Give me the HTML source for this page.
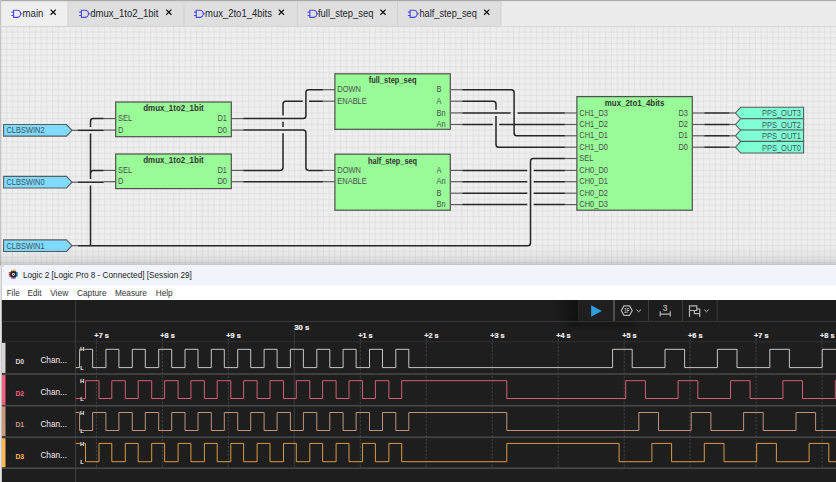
<!DOCTYPE html>
<html lang="en"><head><meta charset="utf-8"><title>Logic</title>
<style>html,body{margin:0;padding:0;background:#efefef;overflow:hidden}body{width:836px;height:482px}</style></head>
<body>
<svg width="836" height="482" viewBox="0 0 836 482" font-family="Liberation Sans, Arial, sans-serif" style="display:block">
<defs>
<pattern id="grid" x="0.25" y="2.6" width="5.7616" height="5.77" patternUnits="userSpaceOnUse">
<rect width="5.7616" height="5.77" fill="#eeeeee"/>
<path d="M0.5 0V5.77M0 0.5H5.7616" stroke="#dfdfdf" stroke-width="0.8" fill="none"/>
</pattern>
<linearGradient id="shadow" x1="0" x2="1" y1="0" y2="0"><stop offset="0" stop-color="#000" stop-opacity="0"/><stop offset="1" stop-color="#000" stop-opacity="0.45"/></linearGradient>
<linearGradient id="shadowv" x1="0" x2="0" y1="0" y2="1"><stop offset="0" stop-color="#000" stop-opacity="0.22"/><stop offset="1" stop-color="#000" stop-opacity="0"/></linearGradient>
<linearGradient id="wshadow" x1="0" x2="0" y1="0" y2="1"><stop offset="0" stop-color="#000" stop-opacity="0"/><stop offset="0.6" stop-color="#000" stop-opacity="0.04"/><stop offset="1" stop-color="#000" stop-opacity="0.13"/></linearGradient>
<filter id="blur" x="-20%" y="-100%" width="140%" height="300%"><feGaussianBlur stdDeviation="3 2"/></filter>
</defs>
<rect x="0" y="0" width="836" height="482" fill="url(#grid)"/>
<rect x="0" y="0" width="836" height="27" fill="#dfdfdf"/>
<rect x="0" y="0" width="68" height="27" fill="#efefef"/>
<rect x="0" y="0" width="836" height="1.2" fill="#ababab"/>
<rect x="0" y="0" width="1.2" height="266" fill="#c4c4c4"/>
<rect x="0" y="26" width="836" height="1" fill="#d2d2d2"/>
<rect x="501" y="1.2" width="335" height="25" fill="#ececec"/>
<rect x="67.5" y="1.2" width="1" height="25" fill="#cfcfcf"/>
<rect x="183.5" y="1.2" width="1" height="25" fill="#cfcfcf"/>
<rect x="296.8" y="1.2" width="1" height="25" fill="#cfcfcf"/>
<rect x="397.0" y="1.2" width="1" height="25" fill="#cfcfcf"/>
<rect x="500.5" y="1.2" width="1" height="25" fill="#cfcfcf"/>
<g fill="none" stroke="#4a4af0" stroke-width="1.1" stroke-linecap="round"><path d="M13.600000000000001 10.200000000000001H17.1A3.6 3.6 0 0 1 17.1 17.400000000000002H13.600000000000001Z"/><path d="M11.8 12.100000000000001H13.600000000000001M11.8 15.5H13.600000000000001M20.700000000000003 13.8H22.0"/></g>
<text x="22.6" y="17.2" font-size="10" fill="#26262e" text-anchor="start" font-weight="normal" textLength="20.8" lengthAdjust="spacingAndGlyphs" >main</text>
<path d="M50.6 9.6L55.800000000000004 14.8M55.800000000000004 9.6L50.6 14.8" stroke="#111" stroke-width="1.3" fill="none"/>
<g fill="none" stroke="#4a4af0" stroke-width="1.1" stroke-linecap="round"><path d="M81.39999999999999 10.200000000000001H84.89999999999999A3.6 3.6 0 0 1 84.89999999999999 17.400000000000002H81.39999999999999Z"/><path d="M79.6 12.100000000000001H81.39999999999999M79.6 15.5H81.39999999999999M88.5 13.8H89.8"/></g>
<text x="90.2" y="17.2" font-size="10" fill="#26262e" text-anchor="start" font-weight="normal" textLength="68.2" lengthAdjust="spacingAndGlyphs" >dmux_1to2_1bit</text>
<path d="M166.20000000000002 9.6L171.4 14.8M171.4 9.6L166.20000000000002 14.8" stroke="#111" stroke-width="1.3" fill="none"/>
<g fill="none" stroke="#4a4af0" stroke-width="1.1" stroke-linecap="round"><path d="M196.20000000000002 10.200000000000001H199.70000000000002A3.6 3.6 0 0 1 199.70000000000002 17.400000000000002H196.20000000000002Z"/><path d="M194.4 12.100000000000001H196.20000000000002M194.4 15.5H196.20000000000002M203.3 13.8H204.6"/></g>
<text x="205" y="17.2" font-size="10" fill="#26262e" text-anchor="start" font-weight="normal" textLength="67" lengthAdjust="spacingAndGlyphs" >mux_2to1_4bits</text>
<path d="M278.79999999999995 9.6L284.0 14.8M284.0 9.6L278.79999999999995 14.8" stroke="#111" stroke-width="1.3" fill="none"/>
<g fill="none" stroke="#4a4af0" stroke-width="1.1" stroke-linecap="round"><path d="M309.8 10.200000000000001H313.3A3.6 3.6 0 0 1 313.3 17.400000000000002H309.8Z"/><path d="M308 12.100000000000001H309.8M308 15.5H309.8M316.9 13.8H318.2"/></g>
<text x="318" y="17.2" font-size="10" fill="#26262e" text-anchor="start" font-weight="normal" textLength="55.5" lengthAdjust="spacingAndGlyphs" >full_step_seq</text>
<path d="M380.4 9.6L385.6 14.8M385.6 9.6L380.4 14.8" stroke="#111" stroke-width="1.3" fill="none"/>
<g fill="none" stroke="#4a4af0" stroke-width="1.1" stroke-linecap="round"><path d="M410.1 10.200000000000001H413.6A3.6 3.6 0 0 1 413.6 17.400000000000002H410.1Z"/><path d="M408.3 12.100000000000001H410.1M408.3 15.5H410.1M417.2 13.8H418.5"/></g>
<text x="419.5" y="17.2" font-size="10" fill="#26262e" text-anchor="start" font-weight="normal" textLength="57.3" lengthAdjust="spacingAndGlyphs" >half_step_seq</text>
<path d="M484.09999999999997 9.6L489.3 14.8M489.3 9.6L484.09999999999997 14.8" stroke="#111" stroke-width="1.3" fill="none"/>
<path d="M72 130.3H78.0" stroke="#5a5a5a" stroke-width="1.15" fill="none"/>
<path d="M72 182.2H78.0" stroke="#5a5a5a" stroke-width="1.15" fill="none"/>
<path d="M72 245.7H78.0" stroke="#5a5a5a" stroke-width="1.15" fill="none"/>
<path d="M103.7 118.6H115.7" stroke="#5a5a5a" stroke-width="1.15" fill="none"/>
<path d="M231.3 118.6H243.3" stroke="#5a5a5a" stroke-width="1.15" fill="none"/>
<path d="M103.7 130.1H115.7" stroke="#5a5a5a" stroke-width="1.15" fill="none"/>
<path d="M231.3 130.1H243.3" stroke="#5a5a5a" stroke-width="1.15" fill="none"/>
<path d="M103.7 170.4H115.7" stroke="#5a5a5a" stroke-width="1.15" fill="none"/>
<path d="M231.3 170.4H243.3" stroke="#5a5a5a" stroke-width="1.15" fill="none"/>
<path d="M103.7 181.7H115.7" stroke="#5a5a5a" stroke-width="1.15" fill="none"/>
<path d="M231.3 181.7H243.3" stroke="#5a5a5a" stroke-width="1.15" fill="none"/>
<path d="M322.9 89.7H334.9" stroke="#5a5a5a" stroke-width="1.15" fill="none"/>
<path d="M322.9 101.2H334.9" stroke="#5a5a5a" stroke-width="1.15" fill="none"/>
<path d="M322.9 170.4H334.9" stroke="#5a5a5a" stroke-width="1.15" fill="none"/>
<path d="M322.9 181.7H334.9" stroke="#5a5a5a" stroke-width="1.15" fill="none"/>
<path d="M450.3 89.7H462.3" stroke="#5a5a5a" stroke-width="1.15" fill="none"/>
<path d="M450.3 101.2H462.3" stroke="#5a5a5a" stroke-width="1.15" fill="none"/>
<path d="M450.3 112.9H462.3" stroke="#5a5a5a" stroke-width="1.15" fill="none"/>
<path d="M450.3 124.5H462.3" stroke="#5a5a5a" stroke-width="1.15" fill="none"/>
<path d="M450.3 170.4H462.3" stroke="#5a5a5a" stroke-width="1.15" fill="none"/>
<path d="M450.3 181.7H462.3" stroke="#5a5a5a" stroke-width="1.15" fill="none"/>
<path d="M450.3 193.2H462.3" stroke="#5a5a5a" stroke-width="1.15" fill="none"/>
<path d="M450.3 204.6H462.3" stroke="#5a5a5a" stroke-width="1.15" fill="none"/>
<path d="M564.9 113.0H576.9" stroke="#5a5a5a" stroke-width="1.15" fill="none"/>
<path d="M564.9 124.5H576.9" stroke="#5a5a5a" stroke-width="1.15" fill="none"/>
<path d="M564.9 135.8H576.9" stroke="#5a5a5a" stroke-width="1.15" fill="none"/>
<path d="M564.9 147.2H576.9" stroke="#5a5a5a" stroke-width="1.15" fill="none"/>
<path d="M564.9 158.5H576.9" stroke="#5a5a5a" stroke-width="1.15" fill="none"/>
<path d="M564.9 170.4H576.9" stroke="#5a5a5a" stroke-width="1.15" fill="none"/>
<path d="M564.9 181.7H576.9" stroke="#5a5a5a" stroke-width="1.15" fill="none"/>
<path d="M564.9 193.2H576.9" stroke="#5a5a5a" stroke-width="1.15" fill="none"/>
<path d="M564.9 204.6H576.9" stroke="#5a5a5a" stroke-width="1.15" fill="none"/>
<path d="M692.3 113.0H704.3" stroke="#5a5a5a" stroke-width="1.15" fill="none"/>
<path d="M729.5 113.0H735.5" stroke="#5a5a5a" stroke-width="1.15" fill="none"/>
<path d="M692.3 124.5H704.3" stroke="#5a5a5a" stroke-width="1.15" fill="none"/>
<path d="M729.5 124.5H735.5" stroke="#5a5a5a" stroke-width="1.15" fill="none"/>
<path d="M692.3 135.8H704.3" stroke="#5a5a5a" stroke-width="1.15" fill="none"/>
<path d="M729.5 135.8H735.5" stroke="#5a5a5a" stroke-width="1.15" fill="none"/>
<path d="M692.3 147.2H704.3" stroke="#5a5a5a" stroke-width="1.15" fill="none"/>
<path d="M729.5 147.2H735.5" stroke="#5a5a5a" stroke-width="1.15" fill="none"/>
<path d="M78.0 130.3H103.7" fill="none" stroke="#262626" stroke-width="1.5" stroke-linejoin="round"/>
<path d="M78.0 182.2H103.7" fill="none" stroke="#262626" stroke-width="1.5" stroke-linejoin="round"/>
<path d="M78.0 245.7H527.7Q530.5 245.7 530.5 242.89999999999998V161.3Q530.5 158.5 533.3 158.5H564.9" fill="none" stroke="#262626" stroke-width="1.5" stroke-linejoin="round"/>
<path d="M90.5 245.7V185.39999999999998M90.5 179.0V173.20000000000002Q90.5 170.4 93.3 170.4H103.7" fill="none" stroke="#262626" stroke-width="1.5" stroke-linejoin="round"/>
<path d="M90.5 173.20000000000002V133.5M90.5 127.10000000000001V121.39999999999999Q90.5 118.6 93.3 118.6H103.7" fill="none" stroke="#262626" stroke-width="1.5" stroke-linejoin="round"/>
<path d="M243.3 118.6H303.09999999999997Q305.9 118.6 305.9 115.8V92.5Q305.9 89.7 308.7 89.7H322.9" fill="none" stroke="#262626" stroke-width="1.5" stroke-linejoin="round"/>
<path d="M243.3 130.1H303.09999999999997Q305.9 130.1 305.9 132.9V167.6Q305.9 170.4 308.7 170.4H322.9" fill="none" stroke="#262626" stroke-width="1.5" stroke-linejoin="round"/>
<path d="M243.3 170.4H280.2Q283 170.4 283 167.6V133.29999999999998M283 126.89999999999999V121.8M283 115.39999999999999V104.0Q283 101.2 285.8 101.2H302.7M309.09999999999997 101.2H322.9" fill="none" stroke="#262626" stroke-width="1.5" stroke-linejoin="round"/>
<path d="M243.3 181.7H322.9" fill="none" stroke="#262626" stroke-width="1.5" stroke-linejoin="round"/>
<path d="M462.3 89.7H511.3Q514.1 89.7 514.1 92.5V133.0Q514.1 135.8 516.9 135.8H564.9" fill="none" stroke="#262626" stroke-width="1.5" stroke-linejoin="round"/>
<path d="M462.3 101.2H493.2Q496 101.2 496 104.0V109.7M496 116.10000000000001V144.39999999999998Q496 147.2 498.8 147.2H564.9" fill="none" stroke="#262626" stroke-width="1.5" stroke-linejoin="round"/>
<path d="M462.3 112.9H510.6M517.6 112.9H564.9" fill="none" stroke="#262626" stroke-width="1.5" stroke-linejoin="round"/>
<path d="M462.3 124.5H492.8M499.2 124.5H564.9" fill="none" stroke="#262626" stroke-width="1.5" stroke-linejoin="round"/>
<path d="M462.3 170.4H527.3M533.7 170.4H564.9" fill="none" stroke="#262626" stroke-width="1.5" stroke-linejoin="round"/>
<path d="M462.3 181.7H527.3M533.7 181.7H564.9" fill="none" stroke="#262626" stroke-width="1.5" stroke-linejoin="round"/>
<path d="M462.3 193.2H527.3M533.7 193.2H564.9" fill="none" stroke="#262626" stroke-width="1.5" stroke-linejoin="round"/>
<path d="M462.3 204.6H527.3M533.7 204.6H564.9" fill="none" stroke="#262626" stroke-width="1.5" stroke-linejoin="round"/>
<path d="M704.3 113.0H729.5" fill="none" stroke="#262626" stroke-width="1.5" stroke-linejoin="round"/>
<path d="M704.3 124.5H729.5" fill="none" stroke="#262626" stroke-width="1.5" stroke-linejoin="round"/>
<path d="M704.3 135.8H729.5" fill="none" stroke="#262626" stroke-width="1.5" stroke-linejoin="round"/>
<path d="M704.3 147.2H729.5" fill="none" stroke="#262626" stroke-width="1.5" stroke-linejoin="round"/>
<rect x="115.7" y="102" width="115.60000000000001" height="34.69999999999999" fill="#98fb98" stroke="#505050" stroke-width="1.2"/>
<text x="173.5" y="111.4" font-size="9" fill="#333" text-anchor="middle" font-weight="bold" textLength="60.5" lengthAdjust="spacingAndGlyphs" >dmux_1to2_1bit</text>
<text transform="translate(118.10 121.20) scale(0.89 1)" font-size="8.4" fill="#4f4f4f" text-anchor="start" font-weight="normal">SEL</text>
<text transform="translate(118.10 132.70) scale(0.89 1)" font-size="8.4" fill="#4f4f4f" text-anchor="start" font-weight="normal">D</text>
<text transform="translate(217.40 121.20) scale(0.89 1)" font-size="8.4" fill="#4f4f4f" text-anchor="start" font-weight="normal">D1</text>
<text transform="translate(217.40 132.70) scale(0.89 1)" font-size="8.4" fill="#4f4f4f" text-anchor="start" font-weight="normal">D0</text>
<rect x="115.7" y="154" width="115.60000000000001" height="34.599999999999994" fill="#98fb98" stroke="#505050" stroke-width="1.2"/>
<text x="173.5" y="163.4" font-size="9" fill="#333" text-anchor="middle" font-weight="bold" textLength="60.5" lengthAdjust="spacingAndGlyphs" >dmux_1to2_1bit</text>
<text transform="translate(118.10 173.00) scale(0.89 1)" font-size="8.4" fill="#4f4f4f" text-anchor="start" font-weight="normal">SEL</text>
<text transform="translate(118.10 184.30) scale(0.89 1)" font-size="8.4" fill="#4f4f4f" text-anchor="start" font-weight="normal">D</text>
<text transform="translate(217.40 173.00) scale(0.89 1)" font-size="8.4" fill="#4f4f4f" text-anchor="start" font-weight="normal">D1</text>
<text transform="translate(217.40 184.30) scale(0.89 1)" font-size="8.4" fill="#4f4f4f" text-anchor="start" font-weight="normal">D0</text>
<rect x="334.9" y="73.8" width="115.40000000000003" height="55.500000000000014" fill="#98fb98" stroke="#505050" stroke-width="1.2"/>
<text x="392.6" y="83.2" font-size="9" fill="#333" text-anchor="middle" font-weight="bold" textLength="47.7" lengthAdjust="spacingAndGlyphs" >full_step_seq</text>
<text transform="translate(337.30 92.30) scale(0.89 1)" font-size="8.4" fill="#4f4f4f" text-anchor="start" font-weight="normal">DOWN</text>
<text transform="translate(337.30 103.80) scale(0.89 1)" font-size="8.4" fill="#4f4f4f" text-anchor="start" font-weight="normal">ENABLE</text>
<text transform="translate(436.40 92.30) scale(0.89 1)" font-size="8.4" fill="#4f4f4f" text-anchor="start" font-weight="normal">B</text>
<text transform="translate(436.40 103.80) scale(0.89 1)" font-size="8.4" fill="#4f4f4f" text-anchor="start" font-weight="normal">A</text>
<text transform="translate(436.40 115.50) scale(0.89 1)" font-size="8.4" fill="#4f4f4f" text-anchor="start" font-weight="normal">Bn</text>
<text transform="translate(436.40 127.10) scale(0.89 1)" font-size="8.4" fill="#4f4f4f" text-anchor="start" font-weight="normal">An</text>
<rect x="334.9" y="154.2" width="115.40000000000003" height="56.0" fill="#98fb98" stroke="#505050" stroke-width="1.2"/>
<text x="392.6" y="163.6" font-size="9" fill="#333" text-anchor="middle" font-weight="bold" textLength="49" lengthAdjust="spacingAndGlyphs" >half_step_seq</text>
<text transform="translate(337.30 173.00) scale(0.89 1)" font-size="8.4" fill="#4f4f4f" text-anchor="start" font-weight="normal">DOWN</text>
<text transform="translate(337.30 184.30) scale(0.89 1)" font-size="8.4" fill="#4f4f4f" text-anchor="start" font-weight="normal">ENABLE</text>
<text transform="translate(436.40 173.00) scale(0.89 1)" font-size="8.4" fill="#4f4f4f" text-anchor="start" font-weight="normal">A</text>
<text transform="translate(436.40 184.30) scale(0.89 1)" font-size="8.4" fill="#4f4f4f" text-anchor="start" font-weight="normal">An</text>
<text transform="translate(436.40 195.80) scale(0.89 1)" font-size="8.4" fill="#4f4f4f" text-anchor="start" font-weight="normal">B</text>
<text transform="translate(436.40 207.20) scale(0.89 1)" font-size="8.4" fill="#4f4f4f" text-anchor="start" font-weight="normal">Bn</text>
<rect x="576.9" y="96.6" width="115.39999999999998" height="113.6" fill="#98fb98" stroke="#505050" stroke-width="1.2"/>
<text x="634.5999999999999" y="106.0" font-size="9" fill="#333" text-anchor="middle" font-weight="bold" textLength="59.5" lengthAdjust="spacingAndGlyphs" >mux_2to1_4bits</text>
<text transform="translate(579.30 115.60) scale(0.89 1)" font-size="8.4" fill="#4f4f4f" text-anchor="start" font-weight="normal">CH1_D3</text>
<text transform="translate(579.30 127.10) scale(0.89 1)" font-size="8.4" fill="#4f4f4f" text-anchor="start" font-weight="normal">CH1_D2</text>
<text transform="translate(579.30 138.40) scale(0.89 1)" font-size="8.4" fill="#4f4f4f" text-anchor="start" font-weight="normal">CH1_D1</text>
<text transform="translate(579.30 149.80) scale(0.89 1)" font-size="8.4" fill="#4f4f4f" text-anchor="start" font-weight="normal">CH1_D0</text>
<text transform="translate(579.30 161.10) scale(0.89 1)" font-size="8.4" fill="#4f4f4f" text-anchor="start" font-weight="normal">SEL</text>
<text transform="translate(579.30 173.00) scale(0.89 1)" font-size="8.4" fill="#4f4f4f" text-anchor="start" font-weight="normal">CH0_D0</text>
<text transform="translate(579.30 184.30) scale(0.89 1)" font-size="8.4" fill="#4f4f4f" text-anchor="start" font-weight="normal">CH0_D1</text>
<text transform="translate(579.30 195.80) scale(0.89 1)" font-size="8.4" fill="#4f4f4f" text-anchor="start" font-weight="normal">CH0_D2</text>
<text transform="translate(579.30 207.20) scale(0.89 1)" font-size="8.4" fill="#4f4f4f" text-anchor="start" font-weight="normal">CH0_D3</text>
<text transform="translate(678.40 115.60) scale(0.89 1)" font-size="8.4" fill="#4f4f4f" text-anchor="start" font-weight="normal">D3</text>
<text transform="translate(678.40 127.10) scale(0.89 1)" font-size="8.4" fill="#4f4f4f" text-anchor="start" font-weight="normal">D2</text>
<text transform="translate(678.40 138.40) scale(0.89 1)" font-size="8.4" fill="#4f4f4f" text-anchor="start" font-weight="normal">D1</text>
<text transform="translate(678.40 149.80) scale(0.89 1)" font-size="8.4" fill="#4f4f4f" text-anchor="start" font-weight="normal">D0</text>
<path d="M3.6 124.50000000000001H66.5L72 130.3L66.5 136.10000000000002H3.6Z" fill="#7fdbff" stroke="#5c5c5c" stroke-width="1.1" stroke-linejoin="miter"/>
<text transform="translate(6.40 133.10) scale(0.89 1)" font-size="8.4" fill="#44525c" text-anchor="start" font-weight="normal">CLBSWIN2</text>
<path d="M3.6 176.39999999999998H66.5L72 182.2L66.5 188.0H3.6Z" fill="#7fdbff" stroke="#5c5c5c" stroke-width="1.1" stroke-linejoin="miter"/>
<text transform="translate(6.40 185.00) scale(0.89 1)" font-size="8.4" fill="#44525c" text-anchor="start" font-weight="normal">CLBSWIN0</text>
<path d="M3.6 239.89999999999998H66.5L72 245.7L66.5 251.5H3.6Z" fill="#7fdbff" stroke="#5c5c5c" stroke-width="1.1" stroke-linejoin="miter"/>
<text transform="translate(6.40 248.50) scale(0.89 1)" font-size="8.4" fill="#44525c" text-anchor="start" font-weight="normal">CLBSWIN1</text>
<path d="M803.6 107.2H740.7L735.5 113.0L740.7 118.8H803.6Z" fill="#7fffd4" stroke="#5c5c5c" stroke-width="1.1" stroke-linejoin="miter"/>
<text transform="translate(801.00 116.30) scale(0.89 1)" font-size="8.4" fill="#44525c" text-anchor="end" font-weight="normal">PPS_OUT3</text>
<path d="M803.6 118.7H740.7L735.5 124.5L740.7 130.3H803.6Z" fill="#7fffd4" stroke="#5c5c5c" stroke-width="1.1" stroke-linejoin="miter"/>
<text transform="translate(801.00 127.80) scale(0.89 1)" font-size="8.4" fill="#44525c" text-anchor="end" font-weight="normal">PPS_OUT2</text>
<path d="M803.6 130.0H740.7L735.5 135.8L740.7 141.60000000000002H803.6Z" fill="#7fffd4" stroke="#5c5c5c" stroke-width="1.1" stroke-linejoin="miter"/>
<text transform="translate(801.00 139.10) scale(0.89 1)" font-size="8.4" fill="#44525c" text-anchor="end" font-weight="normal">PPS_OUT1</text>
<path d="M803.6 141.39999999999998H740.7L735.5 147.2L740.7 153.0H803.6Z" fill="#7fffd4" stroke="#5c5c5c" stroke-width="1.1" stroke-linejoin="miter"/>
<text transform="translate(801.00 150.50) scale(0.89 1)" font-size="8.4" fill="#44525c" text-anchor="end" font-weight="normal">PPS_OUT0</text>
<rect x="0" y="244" width="836" height="21" fill="url(#wshadow)"/>
<path d="M1.2999999999999998 482V268.8Q1.2999999999999998 264.2 5.9 264.2H836V482Z" fill="#cfcfd4"/>
<path d="M1.9 482V269.2Q1.9 264.8 6.300000000000001 264.8H836V482Z" fill="#1e1e1e"/>
<path d="M1.9 300V269.2Q1.9 264.8 6.300000000000001 264.8H836V300Z" fill="#ffffff"/>
<path d="M1.9 285.7V269.2Q1.9 264.8 6.300000000000001 264.8H836V285.7Z" fill="#f1f4fb"/>
<g stroke-width="1.1" stroke-linecap="butt" fill="none"><path d="M8.8 272.9H10.9M8.8 274.4H10.9M8.8 275.9H10.9" stroke="#e8402c"/><path d="M18.0 272.9H15.9M18.0 274.4H15.9M18.0 275.9H15.9" stroke="#2f8fe8"/><path d="M11.9 269.79999999999995V271.9M13.4 269.79999999999995V271.9M14.9 269.79999999999995V271.9" stroke="#f08a1c"/><path d="M11.9 279.0V276.9M13.4 279.0V276.9M14.9 279.0V276.9" stroke="#a050e0"/></g>
<rect x="10.3" y="271.29999999999995" width="6.2" height="6.2" rx="1.4" fill="#24222a"/><circle cx="13.4" cy="274.4" r="1.35" fill="#fff"/><circle cx="13.4" cy="274.4" r="0.55" fill="#24222a"/>
<text x="22.9" y="277.6" font-size="8.6" fill="#1c1c1c" text-anchor="start" font-weight="normal" textLength="169" lengthAdjust="spacingAndGlyphs" >Logic 2 [Logic Pro 8 - Connected] [Session 29]</text>
<text x="6.7" y="295.8" font-size="8.6" fill="#333" text-anchor="start" font-weight="normal" textLength="13" lengthAdjust="spacingAndGlyphs" >File</text>
<text x="27.5" y="295.8" font-size="8.6" fill="#333" text-anchor="start" font-weight="normal" textLength="14" lengthAdjust="spacingAndGlyphs" >Edit</text>
<text x="50.2" y="295.8" font-size="8.6" fill="#333" text-anchor="start" font-weight="normal" textLength="18" lengthAdjust="spacingAndGlyphs" >View</text>
<text x="77" y="295.8" font-size="8.6" fill="#333" text-anchor="start" font-weight="normal" textLength="29.5" lengthAdjust="spacingAndGlyphs" >Capture</text>
<text x="114.9" y="295.8" font-size="8.6" fill="#333" text-anchor="start" font-weight="normal" textLength="32" lengthAdjust="spacingAndGlyphs" >Measure</text>
<text x="155.7" y="295.8" font-size="8.6" fill="#333" text-anchor="start" font-weight="normal" textLength="17" lengthAdjust="spacingAndGlyphs" >Help</text>
<rect x="1.9" y="300" width="836" height="21.30000000000001" fill="#1d1d1d"/>
<rect x="1.9" y="320.90000000000003" width="836" height="1" fill="#3a3a3a"/>
<rect x="75.1" y="300" width="1" height="183" fill="#3e3e3e"/>
<rect x="552" y="300" width="27" height="20.900000000000013" fill="url(#shadow)"/>
<rect x="566" y="321.90000000000003" width="70" height="5" fill="#000" opacity="0.3" filter="url(#blur)"/>
<rect x="578.3" y="300" width="0.9" height="20.900000000000013" fill="#333"/>
<rect x="579.2" y="300" width="34" height="20.900000000000013" fill="#1f1f1f"/>
<rect x="613.2" y="300" width="1.7" height="20.900000000000013" fill="#565656"/>
<path d="M591.1 305.2L601.9 311L591.1 316.8Z" fill="#2e9fdc"/>
<rect x="648.0" y="300" width="1" height="20.900000000000013" fill="#3e3e3e"/>
<rect x="682.0" y="300" width="1" height="20.900000000000013" fill="#3e3e3e"/>
<rect x="716.8" y="300" width="1" height="20.900000000000013" fill="#3e3e3e"/>
<path d="M621.3 310.6L623.9 305.9H629.6L632.2 310.6L629.6 315.3H623.9Z" fill="none" stroke="#b4b4b4" stroke-width="1.15" stroke-linejoin="round"/>
<text x="626.75" y="313.3" font-size="7.4" fill="#b4b4b4" text-anchor="middle" font-weight="bold" textLength="5.4" lengthAdjust="spacingAndGlyphs" >1F</text>
<path d="M636.4000000000001 309.59999999999997L638.7 311.8L641.0 309.59999999999997" fill="none" stroke="#b4b4b4" stroke-width="1"/>
<text x="665.2" y="311.3" font-size="8.4" fill="#b4b4b4" text-anchor="middle" font-weight="normal" stroke="#b4b4b4" stroke-width="0.2">3</text>
<path d="M660.2 311.3V316.6M670.3 311.3V316.6M660.2 314.1H670.3" fill="none" stroke="#b4b4b4" stroke-width="1.2"/>
<g fill="none" stroke="#b4b4b4" stroke-width="1.2" stroke-linejoin="miter"><path d="M689.5 316.9V305.9H696.8V310.5H689.5"/><path d="M696.8 309H699.7V316.9M694.4 310.5V313.7H699.7"/></g>
<path d="M704.2 309.59999999999997L706.5 311.8L708.8 309.59999999999997" fill="none" stroke="#b4b4b4" stroke-width="1"/>
<rect x="1.9" y="341.3" width="836" height="1" fill="#2f2f2f"/>
<path d="M96.4 338.8V468" stroke="#4e4e4e" stroke-width="0.8" stroke-dasharray="2.2 1.5" fill="none"/>
<text x="94.39000000000001" y="338.3" font-size="6.9" fill="#ececec" text-anchor="start" font-weight="bold" textLength="14.4" lengthAdjust="spacingAndGlyphs" stroke="#ececec" stroke-width="0.2">+7 s</text>
<path d="M162.4 338.8V468" stroke="#4e4e4e" stroke-width="0.8" stroke-dasharray="2.2 1.5" fill="none"/>
<text x="160.36" y="338.3" font-size="6.9" fill="#ececec" text-anchor="start" font-weight="bold" textLength="14.4" lengthAdjust="spacingAndGlyphs" stroke="#ececec" stroke-width="0.2">+8 s</text>
<path d="M228.3 338.8V468" stroke="#4e4e4e" stroke-width="0.8" stroke-dasharray="2.2 1.5" fill="none"/>
<text x="226.33" y="338.3" font-size="6.9" fill="#ececec" text-anchor="start" font-weight="bold" textLength="14.4" lengthAdjust="spacingAndGlyphs" stroke="#ececec" stroke-width="0.2">+9 s</text>
<path d="M294.3 330.5V468" stroke="#414141" stroke-width="0.8" fill="none"/>
<text x="294.3" y="330" font-size="6.9" fill="#ececec" text-anchor="start" font-weight="bold" textLength="15" lengthAdjust="spacingAndGlyphs" stroke="#ececec" stroke-width="0.2">30 s</text>
<path d="M360.3 338.8V468" stroke="#4e4e4e" stroke-width="0.8" stroke-dasharray="2.2 1.5" fill="none"/>
<text x="358.27" y="338.3" font-size="6.9" fill="#ececec" text-anchor="start" font-weight="bold" textLength="14.4" lengthAdjust="spacingAndGlyphs" stroke="#ececec" stroke-width="0.2">+1 s</text>
<path d="M426.2 338.8V468" stroke="#4e4e4e" stroke-width="0.8" stroke-dasharray="2.2 1.5" fill="none"/>
<text x="424.24" y="338.3" font-size="6.9" fill="#ececec" text-anchor="start" font-weight="bold" textLength="14.4" lengthAdjust="spacingAndGlyphs" stroke="#ececec" stroke-width="0.2">+2 s</text>
<path d="M492.2 338.8V468" stroke="#4e4e4e" stroke-width="0.8" stroke-dasharray="2.2 1.5" fill="none"/>
<text x="490.21000000000004" y="338.3" font-size="6.9" fill="#ececec" text-anchor="start" font-weight="bold" textLength="14.4" lengthAdjust="spacingAndGlyphs" stroke="#ececec" stroke-width="0.2">+3 s</text>
<path d="M558.2 338.8V468" stroke="#4e4e4e" stroke-width="0.8" stroke-dasharray="2.2 1.5" fill="none"/>
<text x="556.1800000000001" y="338.3" font-size="6.9" fill="#ececec" text-anchor="start" font-weight="bold" textLength="14.4" lengthAdjust="spacingAndGlyphs" stroke="#ececec" stroke-width="0.2">+4 s</text>
<path d="M624.2 338.8V468" stroke="#4e4e4e" stroke-width="0.8" stroke-dasharray="2.2 1.5" fill="none"/>
<text x="622.1500000000001" y="338.3" font-size="6.9" fill="#ececec" text-anchor="start" font-weight="bold" textLength="14.4" lengthAdjust="spacingAndGlyphs" stroke="#ececec" stroke-width="0.2">+5 s</text>
<path d="M690.1 338.8V468" stroke="#4e4e4e" stroke-width="0.8" stroke-dasharray="2.2 1.5" fill="none"/>
<text x="688.12" y="338.3" font-size="6.9" fill="#ececec" text-anchor="start" font-weight="bold" textLength="14.4" lengthAdjust="spacingAndGlyphs" stroke="#ececec" stroke-width="0.2">+6 s</text>
<path d="M756.1 338.8V468" stroke="#4e4e4e" stroke-width="0.8" stroke-dasharray="2.2 1.5" fill="none"/>
<text x="754.0899999999999" y="338.3" font-size="6.9" fill="#ececec" text-anchor="start" font-weight="bold" textLength="14.4" lengthAdjust="spacingAndGlyphs" stroke="#ececec" stroke-width="0.2">+7 s</text>
<path d="M822.1 338.8V468" stroke="#4e4e4e" stroke-width="0.8" stroke-dasharray="2.2 1.5" fill="none"/>
<text x="820.06" y="338.3" font-size="6.9" fill="#ececec" text-anchor="start" font-weight="bold" textLength="14.4" lengthAdjust="spacingAndGlyphs" stroke="#ececec" stroke-width="0.2">+8 s</text>
<rect x="1.9" y="342.9" width="3.6" height="30.0" fill="#d6d6d6"/>
<rect x="1.9" y="373.2" width="836" height="1.6" fill="#474747"/>
<text x="15.4" y="363.79999999999995" font-size="6.9" fill="#d6d6d6" text-anchor="start" font-weight="bold" textLength="8.8" lengthAdjust="spacingAndGlyphs" >D0</text>
<text x="40.4" y="363.2" font-size="8.8" fill="#ebebeb" text-anchor="start" font-weight="normal" textLength="26.6" lengthAdjust="spacingAndGlyphs" >Chan...</text>
<rect x="1.9" y="375" width="3.6" height="30.0" fill="#f3627e"/>
<rect x="1.9" y="404.9" width="836" height="1.6" fill="#474747"/>
<text x="15.4" y="395.9" font-size="6.9" fill="#f3627e" text-anchor="start" font-weight="bold" textLength="8.8" lengthAdjust="spacingAndGlyphs" >D2</text>
<text x="40.4" y="395.3" font-size="8.8" fill="#ebebeb" text-anchor="start" font-weight="normal" textLength="26.6" lengthAdjust="spacingAndGlyphs" >Chan...</text>
<rect x="1.9" y="406.4" width="3.6" height="29.7" fill="#c89a7e"/>
<rect x="1.9" y="436.4" width="836" height="1.6" fill="#474747"/>
<text x="15.4" y="427.15" font-size="6.9" fill="#c89a7e" text-anchor="start" font-weight="bold" textLength="8.8" lengthAdjust="spacingAndGlyphs" >D1</text>
<text x="40.4" y="426.55" font-size="8.8" fill="#ebebeb" text-anchor="start" font-weight="normal" textLength="26.6" lengthAdjust="spacingAndGlyphs" >Chan...</text>
<rect x="1.9" y="438.3" width="3.6" height="29.2" fill="#ffb655"/>
<rect x="1.9" y="467.4" width="836" height="1.6" fill="#474747"/>
<text x="15.4" y="458.79999999999995" font-size="6.9" fill="#ffb655" text-anchor="start" font-weight="bold" textLength="8.8" lengthAdjust="spacingAndGlyphs" >D3</text>
<text x="40.4" y="458.2" font-size="8.8" fill="#ebebeb" text-anchor="start" font-weight="normal" textLength="26.6" lengthAdjust="spacingAndGlyphs" >Chan...</text>
<path d="M75.8 367.6H79.6V349.3H92.6V367.6H105.9V349.3H118.9V367.6H132.3V349.3H145.3V367.6H158.7V349.3H171.7V367.6H185.0V349.3H198.0V367.6H211.3V349.3H224.3V367.6H237.7V349.3H250.7V367.6H264.1V349.3H277.1V367.6H290.4V349.3H303.4V367.6H316.8V349.3H329.8V367.6H343.1V349.3H356.1V367.6H369.5V349.3H382.5V367.6H395.8V349.3H408.8V367.6H612.6V349.3H632.2V367.6H665.0V349.3H684.6V367.6H717.4V349.3H737.0V367.6H769.8V349.3H789.4V367.6H822.2V349.3H836" fill="none" stroke="#d8d8d8" stroke-width="0.9" stroke-linejoin="miter"/>
<path d="M75.8 398.5H85.5V380.7H99.0V398.5H111.8V380.7H125.3V398.5H138.2V380.7H151.7V398.5H164.6V380.7H178.1V398.5H190.9V380.7H204.4V398.5H217.2V380.7H230.8V398.5H243.6V380.7H257.1V398.5H270.0V380.7H283.5V398.5H296.3V380.7H309.8V398.5H322.6V380.7H336.1V398.5H349.0V380.7H362.5V398.5H375.4V380.7H388.9V398.5H401.7V380.7H506.8V398.5H625.7V380.7H645.4V398.5H678.1V380.7H697.8V398.5H730.5V380.7H750.1V398.5H782.9V380.7H802.5V398.5H835.3V380.7H836" fill="none" stroke="#e4667e" stroke-width="0.9" stroke-linejoin="miter"/>
<path d="M75.8 412.5H79.6V430.5H92.6V412.5H105.9V430.5H118.9V412.5H132.3V430.5H145.3V412.5H158.7V430.5H171.7V412.5H185.0V430.5H198.0V412.5H211.3V430.5H224.3V412.5H237.7V430.5H250.7V412.5H264.1V430.5H277.1V412.5H290.4V430.5H303.4V412.5H316.8V430.5H329.8V412.5H343.1V430.5H356.1V412.5H369.5V430.5H382.5V412.5H395.8V430.5H408.8V412.5H506.8V430.5H638.8V412.5H658.5V430.5H691.2V412.5H710.9V430.5H743.6V412.5H763.2V430.5H796.0V412.5H815.6V430.5H836" fill="none" stroke="#cfa084" stroke-width="0.9" stroke-linejoin="miter"/>
<path d="M75.8 443.4H85.5V461.7H99.0V443.4H111.8V461.7H125.3V443.4H138.2V461.7H151.7V443.4H164.6V461.7H178.1V443.4H190.9V461.7H204.4V443.4H217.2V461.7H230.8V443.4H243.6V461.7H257.1V443.4H270.0V461.7H283.5V443.4H296.3V461.7H309.8V443.4H322.6V461.7H336.1V443.4H349.0V461.7H362.5V443.4H375.4V461.7H388.9V443.4H401.7V461.7H506.8V443.4H619.1V461.7H651.9V443.4H671.6V461.7H704.3V443.4H724.0V461.7H756.7V443.4H776.4V461.7H809.1V443.4H828.8V461.7H836" fill="none" stroke="#eca742" stroke-width="0.9" stroke-linejoin="miter"/>
<text x="80.0" y="351.4" font-size="5.8" font-weight="bold" fill="#f2f2f2" stroke="#1e1e1e" stroke-width="0.9" paint-order="stroke">H</text>
<text x="80.2" y="370.2" font-size="5.8" font-weight="bold" fill="#f2f2f2" stroke="#1e1e1e" stroke-width="0.9" paint-order="stroke">L</text>
<text x="80.0" y="382.8" font-size="5.8" font-weight="bold" fill="#f2f2f2" stroke="#1e1e1e" stroke-width="0.9" paint-order="stroke">H</text>
<text x="80.2" y="401.1" font-size="5.8" font-weight="bold" fill="#f2f2f2" stroke="#1e1e1e" stroke-width="0.9" paint-order="stroke">L</text>
<text x="80.0" y="414.6" font-size="5.8" font-weight="bold" fill="#f2f2f2" stroke="#1e1e1e" stroke-width="0.9" paint-order="stroke">H</text>
<text x="80.2" y="433.1" font-size="5.8" font-weight="bold" fill="#f2f2f2" stroke="#1e1e1e" stroke-width="0.9" paint-order="stroke">L</text>
<text x="80.0" y="445.5" font-size="5.8" font-weight="bold" fill="#f2f2f2" stroke="#1e1e1e" stroke-width="0.9" paint-order="stroke">H</text>
<text x="80.2" y="464.3" font-size="5.8" font-weight="bold" fill="#f2f2f2" stroke="#1e1e1e" stroke-width="0.9" paint-order="stroke">L</text>
</svg>
</body></html>
